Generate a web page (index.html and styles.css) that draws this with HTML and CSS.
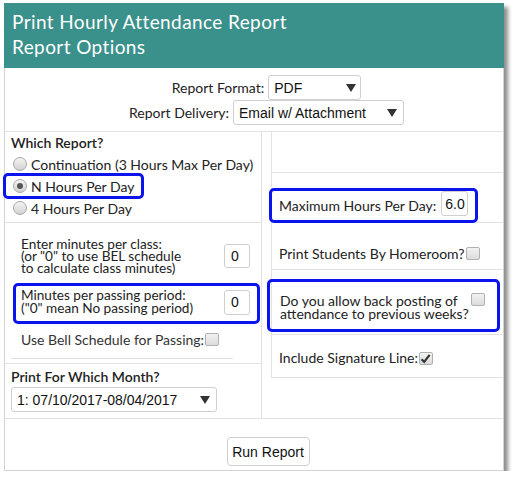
FILE: index.html
```html
<!DOCTYPE html>
<html>
<head>
<meta charset="utf-8">
<link rel="stylesheet" href="styles.css">
</head>
<body>
<div class="window">
  <div class="header">
    <div>Print Hourly Attendance Report</div>
    <div>Report Options</div>
  </div>
  <div class="top">
    <div class="frow"><span class="lbl">Report Format:</span><div class="select sel-format"><span>PDF</span><svg class="arrow" width="10" height="8" viewBox="0 0 10 8"><path d="M0 0H10L5 8Z" fill="#333"/></svg></div></div>
    <div class="frow"><span class="lbl">Report Delivery:</span><div class="select sel-delivery"><span>Email w/ Attachment</span><svg class="arrow" width="10" height="8" viewBox="0 0 10 8"><path d="M0 0H10L5 8Z" fill="#333"/></svg></div></div>
  </div>
  <div class="grid">
    <div class="col left">
      <div class="cell cell-a">
        <div class="heading">Which Report?</div>
        <div class="radio-row"><span class="radio"></span><span>Continuation (3 Hours Max Per Day)</span></div>
        <div class="radio-row"><span class="radio checked"></span><span>N Hours Per Day</span></div>
        <div class="radio-row"><span class="radio"></span><span>4 Hours Per Day</span></div>
      </div>
      <div class="cell cell-b">
        <div class="min-row first">
          <div class="min-text">Enter minutes per class:<br>(or "0" to use BEL schedule<br>to calculate class minutes)</div>
          <div class="input">0</div>
        </div>
        <div class="min-row second">
          <div class="min-text">Minutes per passing period:<br>("0" mean No passing period)</div>
          <div class="input tall">0</div>
        </div>
        <div class="bell-row"><span>Use Bell Schedule for Passing:</span><span class="check"></span></div>
        <div class="inner-line"></div>
      </div>
      <div class="cell cell-c">
        <div class="heading">Print For Which Month?</div>
        <div class="select sel-month"><span>1: 07/10/2017-08/04/2017</span><svg class="arrow" width="10" height="8" viewBox="0 0 10 8"><path d="M0 0H10L5 8Z" fill="#333"/></svg></div>
      </div>
    </div>
    <div class="col right">
      <div class="nest">
        <div class="nrow r0"></div>
        <div class="nrow r1"><span>Maximum Hours Per Day:</span><div class="input tall wide">6.0</div></div>
        <div class="nrow r2"><span>Print Students By Homeroom?</span><span class="check"></span></div>
        <div class="nrow r3"><div class="post-text">Do you allow back posting of<br>attendance to previous weeks?</div><span class="check"></span></div>
        <div class="nrow r4"><span>Include Signature Line:</span><span class="check checked"><svg width="11" height="11" viewBox="0 0 11 11"><path d="M1.5 6.2L4.2 8.8L9.6 1.8" fill="none" stroke="#333" stroke-width="2.2"/></svg></span></div>
      </div>
    </div>
  </div>
  <div class="footer">
    <div class="button">Run Report</div>
  </div>
</div>
<div class="mark mark-n"></div>
<div class="mark mark-pass"></div>
<div class="mark mark-max"></div>
<div class="mark mark-post"></div>
</body>
</html>
```
FILE: styles.css
```css
* { box-sizing: border-box; }
body {
  margin: 0;
  background: #fff;
  font-family: Lato, "Open Sans", sans-serif;
  color: #222;
  font-size: 14px;
}
.window {
  width: 500px;
  margin: 3px 0 0 4px;
  border: 1px solid #d4d4d4;
  border-top: 0;
  background: #fff;
  box-shadow: 4px 4px 4px rgba(0, 0, 0, 0.45);
}
.header {
  margin: 0 -1px;
  height: 65px;
  background: #3a908a;
  color: #fff;
  font-size: 19px;
  line-height: 25px;
  letter-spacing: 0.4px;
  padding: 6px 0 0 8px;
}
.top {
  padding: 7px 0 6px 25px;
  display: flex;
  flex-direction: column;
  align-items: center;
}
.frow {
  display: flex;
  align-items: center;
  height: 25px;
  gap: 4px;
}
.select {
  height: 25px;
  border: 1px solid #cfcfcf;
  border-radius: 3px;
  background: #fff;
  font-family: "Liberation Sans", Arial, sans-serif;
  font-size: 14px;
  color: #111;
  display: flex;
  align-items: center;
  justify-content: space-between;
  padding: 0 4px 0 5px;
}
.sel-format { width: 93px; }
.sel-delivery { width: 171px; padding-right: 6px; }
.grid {
  display: flex;
  border-top: 1px solid #e2e2e2;
  border-bottom: 1px solid #e2e2e2;
}
.col.left {
  width: 257px;
  border-right: 1px solid #e2e2e2;
}
.col.right {
  flex: 1;
  padding-left: 9px;
}
.cell-a {
  height: 91px;
  border-bottom: 1px solid #e2e2e2;
  padding: 1px 0 0 6px;
}
.heading {
  line-height: 20px;
  font-weight: 600;
}
.radio-row {
  display: flex;
  align-items: center;
  height: 22px;
}
.radio {
  width: 14px;
  height: 14px;
  margin: 0 4px 0 2px;
  border-radius: 50%;
  border: 1px solid #a8a8a8;
  background: linear-gradient(#f4f4f4, #d2d2d2);
  position: relative;
}
.radio.checked::after {
  content: "";
  position: absolute;
  left: 3px;
  top: 3px;
  width: 6px;
  height: 6px;
  border-radius: 50%;
  background: #555;
}
.cell-b {
  height: 141px;
  border-bottom: 1px solid #e2e2e2;
  padding: 15px 0 0 16px;
}
.min-row {
  display: flex;
  align-items: center;
}
.min-row.second { margin-top: 15px; }
.min-text {
  width: 203px;
  font-size: 13.6px;
  line-height: 12px;
}
.second .min-text { line-height: 13px; }
.input {
  width: 26px;
  height: 24px;
  border: 1px solid #cfcfcf;
  border-radius: 3px;
  font-family: "Liberation Sans", Arial, sans-serif;
  font-size: 14px;
  color: #111;
  display: flex;
  align-items: center;
  padding-left: 6px;
}
.input.tall { height: 25px; }
.bell-row {
  display: flex;
  align-items: center;
  height: 16px;
  margin-top: 16px;
  color: #333;
  gap: 1px;
}
.check {
  width: 14px;
  height: 13px;
  border: 1px solid #b0b0b0;
  border-radius: 2px;
  background: linear-gradient(#f2f2f2, #dcdcdc);
  display: inline-flex;
  align-items: center;
  justify-content: center;
}
.inner-line {
  margin: 11px 0 0 -10px;
  width: 222px;
  border-top: 1px solid #e2e2e2;
}
.cell-c {
  height: 54px;
  padding: 3px 0 0 6px;
}
.sel-month {
  width: 206px;
  padding-right: 6px;
}
.nest {
  border-left: 1px solid #e2e2e2;
}
.nrow {
  border-bottom: 1px solid #e2e2e2;
  padding-left: 7px;
}
.r0 { height: 41px; }
.r1 {
  height: 50px;
  padding-top: 18px;
  display: flex;
  align-items: flex-start;
  gap: 5px;
}
.r1 > span { line-height: 25px; padding-top: 2px; }
.input.wide { width: 27px; padding-left: 3px; }
.r2 {
  height: 47px;
  padding-top: 21px;
  display: flex;
  align-items: flex-start;
  line-height: 20px;
}
.r2 .check { margin-top: 3px; margin-left: 1px; }
.r3 {
  height: 65px;
  padding-top: 24px;
  padding-left: 8px;
  display: flex;
  align-items: flex-start;
}
.post-text {
  width: 191px;
  line-height: 13px;
}
.r3 .check { margin-top: -1px; }
.r4 {
  height: 43px;
  padding-top: 13px;
  display: flex;
  align-items: flex-start;
  line-height: 20px;
}
.r4 .check { margin-top: 4px; margin-left: 1px; }
.footer {
  height: 51px;
  padding: 18px 0 0 28px;
  display: flex;
  justify-content: center;
}
.button {
  width: 83px;
  height: 29px;
  border: 1px solid #cfcfcf;
  border-radius: 4px;
  font-family: "Liberation Sans", Arial, sans-serif;
  font-size: 14px;
  color: #111;
  display: flex;
  align-items: center;
  justify-content: center;
}
.mark {
  position: absolute;
  border: 3px solid #0b14ec;
  border-radius: 5px;
}
.mark-n { left: 3px; top: 173px; width: 141px; height: 26px; }
.mark-pass { left: 13px; top: 283px; width: 247px; height: 41px; }
.mark-max { left: 269px; top: 188px; width: 209px; height: 35px; }
.mark-post { left: 267px; top: 279px; width: 233px; height: 53px; }
```
